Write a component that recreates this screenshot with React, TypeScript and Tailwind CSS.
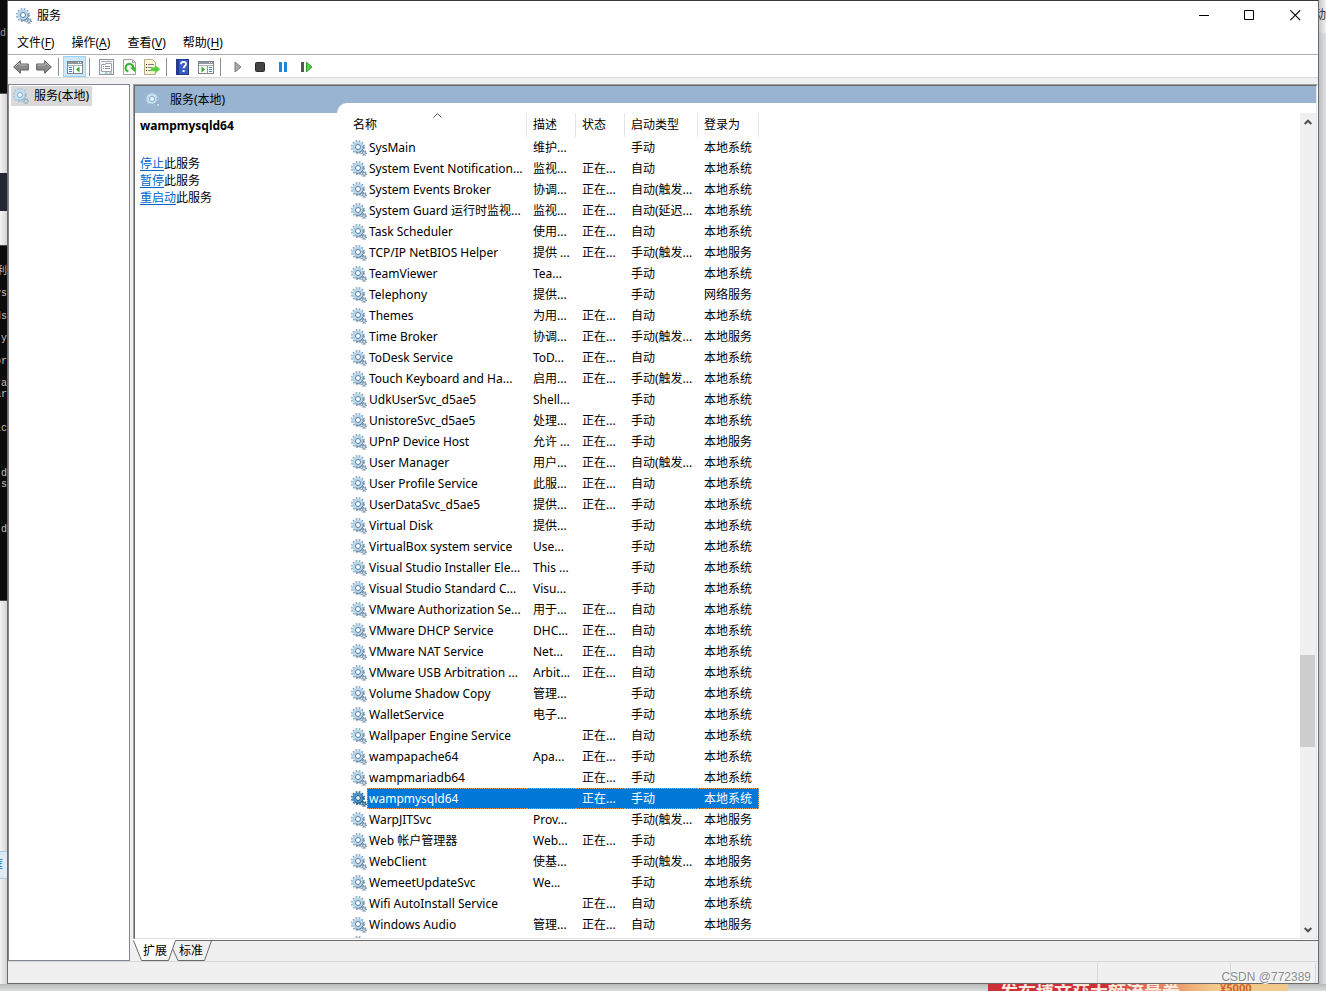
import React from "react";

type Row = [name: string, desc: string, running: boolean, start: string, account: string];

const MANUAL = "手动";
const AUTO = "自动";
const MANUAL_T = "手动(触发...";
const AUTO_T = "自动(触发...";
const SYS = "本地系统";
const LOC = "本地服务";

const rows: Row[] = [
  ["SysMain", "维护...", false, MANUAL, SYS],
  ["System Event Notification...", "监视...", true, AUTO, SYS],
  ["System Events Broker", "协调...", true, AUTO_T, SYS],
  ["System Guard 运行时监视...", "监视...", true, "自动(延迟...", SYS],
  ["Task Scheduler", "使用...", true, AUTO, SYS],
  ["TCP/IP NetBIOS Helper", "提供 ...", true, MANUAL_T, LOC],
  ["TeamViewer", "Tea...", false, MANUAL, SYS],
  ["Telephony", "提供...", false, MANUAL, "网络服务"],
  ["Themes", "为用...", true, AUTO, SYS],
  ["Time Broker", "协调...", true, MANUAL_T, LOC],
  ["ToDesk Service", "ToD...", true, AUTO, SYS],
  ["Touch Keyboard and Ha...", "启用...", true, MANUAL_T, SYS],
  ["UdkUserSvc_d5ae5", "Shell...", false, MANUAL, SYS],
  ["UnistoreSvc_d5ae5", "处理...", true, MANUAL, SYS],
  ["UPnP Device Host", "允许 ...", true, MANUAL, LOC],
  ["User Manager", "用户...", true, AUTO_T, SYS],
  ["User Profile Service", "此服...", true, AUTO, SYS],
  ["UserDataSvc_d5ae5", "提供...", true, MANUAL, SYS],
  ["Virtual Disk", "提供...", false, MANUAL, SYS],
  ["VirtualBox system service", "Use...", false, MANUAL, SYS],
  ["Visual Studio Installer Ele...", "This ...", false, MANUAL, SYS],
  ["Visual Studio Standard C...", "Visu...", false, MANUAL, SYS],
  ["VMware Authorization Se...", "用于...", true, AUTO, SYS],
  ["VMware DHCP Service", "DHC...", true, AUTO, SYS],
  ["VMware NAT Service", "Net...", true, AUTO, SYS],
  ["VMware USB Arbitration ...", "Arbit...", true, AUTO, SYS],
  ["Volume Shadow Copy", "管理...", false, MANUAL, SYS],
  ["WalletService", "电子...", false, MANUAL, SYS],
  ["Wallpaper Engine Service", "", true, AUTO, SYS],
  ["wampapache64", "Apa...", true, MANUAL, SYS],
  ["wampmariadb64", "", true, MANUAL, SYS],
  ["wampmysqld64", "", true, MANUAL, SYS],
  ["WarpJITSvc", "Prov...", false, MANUAL_T, LOC],
  ["Web 帐户管理器", "Web...", true, MANUAL, SYS],
  ["WebClient", "使基...", false, MANUAL_T, LOC],
  ["WemeetUpdateSvc", "We...", false, MANUAL, SYS],
  ["Wifi AutoInstall Service", "", true, AUTO, SYS],
  ["Windows Audio", "管理...", true, AUTO, LOC],
];

const SELECTED = "wampmysqld64";

function Gears({ tone = "normal" }: { tone?: "normal" | "selected" | "pale" }) {
  const c = {
    normal: { edge: "#86a6bf", body: "#b5d6ea", ring: "#56789a", hole: "#ffffff", small: "#7d94a8" },
    selected: { edge: "#2a6595", body: "#3f93cd", ring: "#174f7c", hole: "#d8ecfa", small: "#2b5f88" },
    pale: { edge: "#9fc0da", body: "#c3e0f0", ring: "#86adc8", hole: "#f2f8fc", small: "#93aec2" },
  }[tone];
  return (
    <svg className="h-4 w-4 shrink-0" viewBox="0 0 16 16" aria-hidden="true">
      <circle cx="7" cy="7" r="6.2" fill="none" stroke={c.edge} strokeWidth="1.6" strokeDasharray="1.7 1.55" />
      <circle cx="7" cy="7" r="4.2" fill="none" stroke={c.body} strokeWidth="2.8" />
      <path d="M12.2 5.500A5.500 5.500 0 0 1 4.500 11.900" fill="none" stroke={c.ring} strokeWidth="1" />
      <circle cx="7" cy="7" r="2.5" fill={c.hole} stroke={c.ring} strokeWidth="1" />
      <circle cx="13" cy="13" r="2.3" fill="none" stroke={c.small} strokeWidth="1.4" strokeDasharray="1 0.8" />
      <circle cx="13" cy="13" r="1.5" fill={c.body} stroke={c.small} strokeWidth="0.9" />
      <circle cx="13" cy="13" r="0.6" fill={c.hole} />
    </svg>
  );
}

function Arrow({ flip = false }: { flip?: boolean }) {
  return (
    <svg className={flip ? "h-4 w-4 -scale-x-100" : "h-4 w-4"} viewBox="0 0 16 16">
      <path d="M.7 8 7.3 1.7V5h8v6h-8v3.3z" fill="#8a8a8a" stroke="#5c5c5c" strokeWidth="1" />
      <path d="M2.4 7.6 6.4 3.8V6h8" fill="none" stroke="#b9b9b9" strokeWidth="1" />
    </svg>
  );
}

function PaneIcon({ right = false }: { right?: boolean }) {
  return (
    <svg className="h-4 w-4" viewBox="0 0 16 16">
      <rect x=".5" y="2.5" width="15" height="12" fill="#fff" stroke="#7d858e" />
      <rect x="1" y="3" width="14" height="2" fill="#8f979f" />
      <path d="M11 3.5h1M13 3.5h1" stroke="#fff" />
      <path d="M1 6.5h14" stroke="#a9b0b7" />
      {right ? (
        <>
          <path d="M9.5 7v7" stroke="#8f979f" />
          <path d="M11 8.5h3M11 10.5h3M11 12.5h3" stroke="#3f83c9" />
          <path d="M3.5 7.5v6L7 10.5z" fill="#35a52c" />
        </>
      ) : (
        <>
          <path d="M6.5 7v7" stroke="#8f979f" />
          <path d="M2 8.5h3M2 10.5h3M2 12.5h3" stroke="#3f83c9" />
          <path d="M12.5 7.5v6L9 10.5z" fill="#35a52c" />
        </>
      )}
    </svg>
  );
}

function PropertiesIcon() {
  return (
    <svg className="h-4 w-4" viewBox="0 0 16 16">
      <rect x="1.5" y=".5" width="14" height="15" fill="#f5f6f7" stroke="#8b9299" />
      <path d="M3 2.5h11" stroke="#a5acb3" />
      <path d="M3.500 5.500h4v-1h6v8h-10z" fill="#fff" stroke="#9ba3ab" />
      <path d="M5 7.500h1M5 9.500h1" stroke="#41a4c6" />
      <path d="M7 7.500h5M7 9.500h5" stroke="#8b9299" />
      <path d="M7 14h2.5" stroke="#29b6dd" />
      <path d="M11 14h3" stroke="#8b9299" />
    </svg>
  );
}

function RefreshIcon() {
  return (
    <svg className="h-4 w-4" viewBox="0 0 16 16">
      <path d="M2.5.5h9l3 3v12h-12z" fill="#fafafa" stroke="#a3a3a3" />
      <path d="M11.5.5v3h3" fill="none" stroke="#a3a3a3" />
      <path d="M7.300 12.500A3.800 3.800 0 1 1 12.200 9" fill="none" stroke="#3cb52e" strokeWidth="2" />
      <path d="M8.800 8.500h5.700v5z" fill="#3cb52e" />
    </svg>
  );
}

function ExportIcon() {
  return (
    <svg className="h-4 w-4" viewBox="0 0 16 16">
      <path d="M.5.5h8l3 3v12H.5z" fill="#fdf6d5" stroke="#b3aa8d" />
      <path d="M2 5.5h1M2 8.5h1M2 11.5h1" stroke="#333" />
      <path d="M4 5.5h6M4 8.5h4M4 11.5h4" stroke="#77808a" />
      <path d="M7 8.5h4V6l5 4.2-5 4.3V12H7z" fill="#55ca3c" stroke="#93dd83" strokeWidth=".6" />
    </svg>
  );
}

function HelpIcon() {
  return (
    <svg className="h-4 w-4" viewBox="0 0 16 16">
      <rect x="1.5" y=".5" width="12" height="15" fill="#3a5bc4" stroke="#24388c" />
      <path d="M2 1h2v14H2z" fill="#22398f" />
      <path d="M6 5.3C6.1 3.6 7.200 2.9 8.500 2.9c1.5 0 2.5.8 2.5 2.1 0 2-2.4 2-2.4 4.3" fill="none" stroke="#fff" strokeWidth="1.8" />
      <rect x="7.600" y="11" width="2" height="2" fill="#fff" />
    </svg>
  );
}

function Tool({ label, active = false, children }: { label: string; active?: boolean; children: React.ReactNode }) {
  return (
    <button
      aria-label={label}
      className={
        active
          ? "flex w-[23px] items-center justify-center self-stretch border border-[#99d1ff] bg-[#cce8ff]"
          : "flex w-[23px] items-center justify-center self-stretch"
      }
    >
      {children}
    </button>
  );
}

const Separator = () => <span className="mr-1 ml-[3px] h-[18px] w-px bg-[#8d8d8d]" />;

function Menu({ label, accel }: { label: string; accel: string }) {
  return (
    <button>
      {label}(<u className="underline-offset-2">{accel}</u>)
    </button>
  );
}

function TitleBar() {
  return (
    <header className="flex h-[29px] items-center bg-white pl-2">
      <Gears />
      <h1 className="ml-[5px] flex-1">服务</h1>
      <div className="flex self-stretch">
        <button aria-label="最小化" className="flex w-[46px] items-center justify-center">
          <svg className="h-[11px] w-[11px]" viewBox="0 0 11 11"><path d="M1 5.5h10" stroke="#000" /></svg>
        </button>
        <button aria-label="最大化" className="flex w-[46px] items-center justify-center">
          <svg className="h-[11px] w-[11px]" viewBox="0 0 11 11"><path d="M.5.5h9v9h-9z" fill="none" stroke="#000" /></svg>
        </button>
        <button aria-label="关闭" className="flex w-[46px] items-center justify-center">
          <svg className="h-[11px] w-[11px]" viewBox="0 0 11 11"><path d="m.3.3 9.900 9.900m0-9.900-9.900 9.900" stroke="#000" strokeWidth="1.1" /></svg>
        </button>
      </div>
    </header>
  );
}

function Toolbar() {
  return (
    <div className="flex h-6 border-t border-b border-t-[#b0b0b0] border-b-[#dadada] bg-white pt-px pl-px">
      <div className="flex items-center">
        <Tool label="后退"><Arrow /></Tool>
        <Tool label="前进"><Arrow flip /></Tool>
        <Separator />
        <Tool label="显示控制台树" active><PaneIcon /></Tool>
        <Separator />
        <Tool label="属性"><PropertiesIcon /></Tool>
        <Tool label="刷新"><RefreshIcon /></Tool>
        <Tool label="导出列表"><ExportIcon /></Tool>
        <Separator />
        <Tool label="帮助"><HelpIcon /></Tool>
        <Tool label="显示操作窗格"><PaneIcon right /></Tool>
        <Separator />
        <Tool label="启动服务">
          <svg className="h-4 w-4" viewBox="0 0 16 16"><path d="M6 3v10l6-5z" fill="#a9a9a9" stroke="#7a7a7a" /></svg>
        </Tool>
        <Tool label="停止服务">
          <svg className="h-4 w-4" viewBox="0 0 16 16"><rect x="3.5" y="3.5" width="9" height="9" rx="1" fill="#444" stroke="#2c2c2c" /></svg>
        </Tool>
        <Tool label="暂停服务">
          <svg className="h-4 w-4" viewBox="0 0 16 16"><path d="M4 3h3v10H4zM9 3h3v10H9z" fill="#1e86d2" /></svg>
        </Tool>
        <Tool label="重启动服务">
          <svg className="h-4 w-4" viewBox="0 0 16 16">
            <path d="M3 3h3v10H3z" fill="#555" />
            <path d="M8.5 3.2v9.6l5.5-4.8z" fill="#5bd13f" stroke="#2f9e22" />
          </svg>
        </Tool>
      </div>
    </div>
  );
}

function Action({ verb }: { verb: string }) {
  return (
    <p>
      <a href="#" className="text-[#0066cc] underline underline-offset-2">{verb}</a>此服务
    </p>
  );
}

function ServiceTable() {
  const head = "h-6 border-r border-[#e5e5e5] p-0 pl-1.5 text-left font-normal";
  return (
    <table className="table-fixed border-separate border-spacing-0 whitespace-nowrap">
      <colgroup>
        <col className="w-[182px]" />
        <col className="w-[49px]" />
        <col className="w-[49px]" />
        <col className="w-[73px]" />
        <col className="w-[61px]" />
      </colgroup>
      <thead>
        <tr>
          <th className={head} aria-sort="ascending">
            <div className="relative pl-0.5">
              <button>名称</button>
              <svg className="absolute -top-1 left-[82px] h-[5px] w-[9px]" viewBox="0 0 9 5"><path d="m.5 4.5 4-4 4 4" fill="none" stroke="#555" /></svg>
            </div>
          </th>
          <th className={head}><button>描述</button></th>
          <th className={head}><button>状态</button></th>
          <th className={head}><button>启动类型</button></th>
          <th className={head}><button>登录为</button></th>
        </tr>
      </thead>
      <tbody>
        {rows.map(([name, desc, running, start, account]) => {
          const sel = name === SELECTED;
          const cell = sel
            ? "h-[21px] border-y border-dotted border-[#f0a35a] bg-[#0078d7] p-0 pl-1.5 text-white last:border-r"
            : "h-[21px] p-0 pl-1.5";
          return (
            <tr key={name} aria-selected={sel}>
              <td className="h-[21px] p-0 pl-1.5">
                <div className="flex h-[21px] items-center">
                  <Gears tone={sel ? "selected" : "normal"} />
                  <span
                    className={
                      sel
                        ? "flex flex-1 items-center self-stretch border-y border-l border-dotted border-[#f0a35a] bg-[#0078d7] pl-px text-white"
                        : "flex-1 pl-0.5"
                    }
                  >
                    {name}
                  </span>
                </div>
              </td>
              <td className={cell}>{desc}</td>
              <td className={cell}>{running ? "正在..." : ""}</td>
              <td className={cell}>{start}</td>
              <td className={cell}>{account}</td>
            </tr>
          );
        })}
      </tbody>
    </table>
  );
}

function ScrollBar() {
  return (
    <div className="mt-[10px] flex w-4 flex-col items-center bg-[#f0f0f0]">
      <button aria-label="向上滚动" className="flex h-[17px] w-full items-center justify-center">
        <svg className="h-[6px] w-[8px]" viewBox="0 0 8 6"><path d="m.7 5 3.3-3.3L7.300 5" fill="none" stroke="#505050" strokeWidth="2" /></svg>
      </button>
      <div className="flex w-full flex-1 flex-col">
        <div className="flex-[525]" />
        <div className="mr-px flex-[92] bg-[#cdcdcd]" />
        <div className="flex-[174]" />
      </div>
      <button aria-label="向下滚动" className="flex h-[17px] w-full items-center justify-center">
        <svg className="h-[6px] w-[8px]" viewBox="0 0 8 6"><path d="m.7 1 3.3 3.300L7.300 1" fill="none" stroke="#505050" strokeWidth="2" /></svg>
      </button>
    </div>
  );
}

function ViewTabs() {
  return (
    <div className="flex h-[21px]">
      <div className="relative flex w-[79px]">
        <svg className="absolute inset-0 h-[21px] w-[79px]" viewBox="0 0 79 21" aria-hidden="true">
          <path d="M0 0 8.500 20.500H35.500L42.500.500V0z" fill="#fff" />
          <path d="M.5.5 8.500 20.500H35.500L42.500.5H79" fill="none" stroke="#696969" />
          <path d="M40 9.500 45 20.500H71.500L78.500.5" fill="none" stroke="#696969" />
        </svg>
        <button className="relative pl-[10px]">扩展</button>
        <button className="relative pl-3">标准</button>
      </div>
      <div className="flex-1 border-t border-[#696969]" />
    </div>
  );
}

function DetailPane() {
  return (
    <section className="flex min-w-0 flex-1 flex-col">
      <div className="flex flex-1 flex-col border-t border-r border-l border-t-[#a0a0a0] border-r-white border-l-[#a0a0a0]">
        <div className="flex flex-1 border-t border-r border-b border-l border-t-[#696969] border-r-[#e3e3e3] border-b-[#e3e3e3] border-l-[#696969] bg-[#99b4d1]">
          <div className="flex w-[202px] flex-col">
            <div className="flex h-[27px] items-center gap-2 pl-[10px]">
              <Gears tone="pale" />
              <h2 className="pl-px">服务(本地)</h2>
            </div>
            <div className="flex-1 bg-white pt-[3px] pl-[5px] leading-[17px]">
              <h3 className="leading-5 font-bold">wampmysqld64</h3>
              <div className="mt-[19px]">
                <Action verb="停止" />
                <Action verb="暂停" />
                <Action verb="重启动" />
              </div>
            </div>
          </div>
          <div className="mt-[17px] flex flex-1 rounded-tl-[10px] bg-white">
            <div className="flex-1 pt-[10px] pl-2">
              <ServiceTable />
              <div className="h-[3px] overflow-hidden pt-px pl-1.5"><Gears /></div>
            </div>
            <ScrollBar />
          </div>
        </div>
      </div>
      <div className="h-px bg-white" />
      <ViewTabs />
    </section>
  );
}

const consoleLines = [
  "利", "", "ys", "", "ds", "", "y", "", "or", "", "ra", "ar",
  "", "", "\\c", "", "", "", ".d", ".s", "", "", "", ".d",
];

function LeftBackdrop() {
  return (
    <aside className="flex w-[7px] flex-col overflow-hidden bg-linear-to-r from-[#f3f3f3] to-[#d4d4d4]">
      <div className="h-[93px] bg-[#0c0c0c] pt-[26px] font-mono text-[10px] text-[#999]">d</div>
      <div className="h-[80px] border-t border-[#555]" />
      <div className="h-[38px] bg-[#24272f]" />
      <div className="h-[34px]" />
      <div className="flex h-[356px] flex-col justify-between border-y border-[#444] bg-[#0c0c0c] pt-5 pb-[65px] font-['Liberation_Mono','Noto_Sans_CJK_SC',monospace] text-[10px] leading-[11px] text-[#c0c0c0]">
        {consoleLines.map((text, i) => (
          <div key={i} className="flex h-[11px] justify-end">{text}</div>
        ))}
      </div>
      <div className="h-[250px]" />
      <div className="flex h-[28px] items-center justify-end border-y border-[#a9cbe6] bg-[#e0eaf2] pr-1 text-[#1a73c8]">框</div>
    </aside>
  );
}

export default function App() {
  return (
    <div className="flex min-h-screen flex-col overflow-hidden bg-[#d9dbdb] font-['Noto_Sans','Noto_Sans_CJK_SC',sans-serif] text-[12px] leading-4 text-black">
      <div className="flex flex-1">
        <LeftBackdrop />
        <main className="relative flex min-w-0 flex-1 flex-col border border-[#6b6b6b] border-t-[#3a3a3a] bg-[#f0f0f0]">
          <TitleBar />
          <nav className="flex h-6 items-center gap-[17px] bg-white pt-px pl-[9px]">
            <Menu label="文件" accel="F" />
            <Menu label="操作" accel="A" />
            <Menu label="查看" accel="V" />
            <Menu label="帮助" accel="H" />
          </nav>
          <Toolbar />
          <div className="mt-1.5 flex flex-1">
            <aside className="mr-[3px] w-[122px] border border-[#828790] bg-white">
              <button className="mt-px ml-0.5 flex h-5 items-center gap-[5px] bg-[#d9d9d9] px-[3px] pl-0.5">
                <Gears tone="pale" />
                服务(本地)
              </button>
            </aside>
            <DetailPane />
          </div>
          <footer className="flex h-[22px] justify-end border-t border-[#d7d7d7] pt-px pr-0.5">
            <div className="w-[133px] border-l border-[#d7d7d7]" />
            <div className="w-[86px] border-x border-[#d7d7d7]" />
          </footer>
          <span className="absolute right-[7px] -bottom-0.5 font-['Liberation_Sans',sans-serif] text-[12px] text-[#8c8c8c] [text-shadow:1px_1px_0_#fff]">
            CSDN @772389
          </span>
        </main>
        <aside className="w-[7px] overflow-hidden bg-linear-to-r from-[#bcc0c2] to-[#dfe2e4] whitespace-nowrap">
          <div className="flex h-[33px] justify-end bg-linear-to-r from-[#c9c9c9] to-[#f2f2f2] pt-[7px] text-[#333]">动</div>
        </aside>
      </div>
      <div className="flex h-[7px] justify-end overflow-hidden bg-linear-to-b from-[#b9baba] to-[#dcdddd] pr-[38px]">
        <div className="flex w-[300px] bg-linear-to-r from-[#cf3038] from-40% to-[#f2c98a] to-75% pl-3 text-[18px] leading-4 font-bold whitespace-nowrap text-[#fbe9e0]">
          发布博文获大额流量券
          <span className="ml-10 text-[11px] leading-[8px] text-[#d4622c]">¥5000</span>
        </div>
      </div>
    </div>
  );
}
